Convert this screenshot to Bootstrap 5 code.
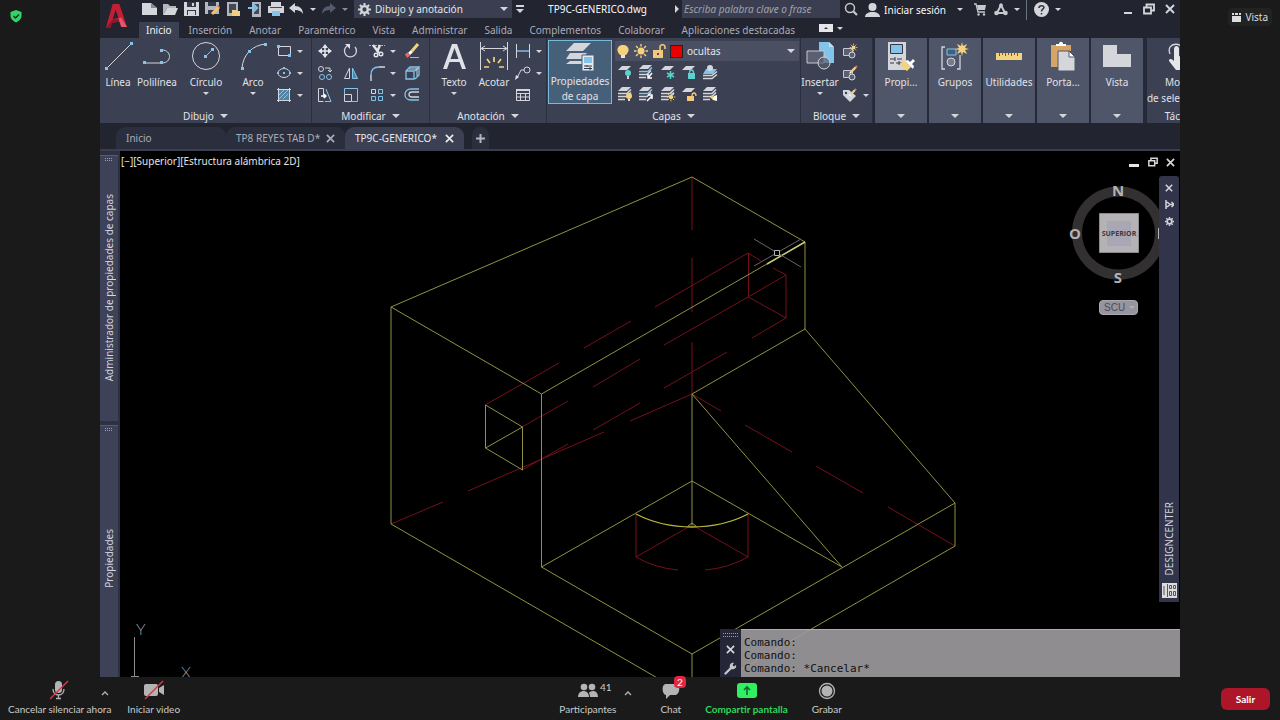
<!DOCTYPE html>
<html lang="es">
<head>
<meta charset="utf-8">
<meta name="viewport" content="width=device-width, initial-scale=1">
<title>TP9C-GENERICO.dwg</title>
<link rel="stylesheet" href="https://cdn.jsdelivr.net/npm/bootstrap@5.3.0/dist/css/bootstrap.min.css">
<style>
:root{--ink:#d4d6dc;--bar:#222430;--panel:#3b4053;--fold:#50566a;--zoom:#1a1a1a}
body{background:var(--zoom);color:var(--ink);font:10px/16px "Noto Sans","Open Sans",sans-serif}
svg{display:block;fill:none;flex:none}
button{border:0;background:none;color:inherit;font:inherit;padding:0;line-height:16px}
.gutter{flex:0 0 100px}
.cad{min-width:0;overflow:hidden;background:var(--bar)}
.brand{flex:0 0 39px}
.titlebar{height:20px}
.cell{width:21px;height:18px;display:flex;align-items:center;justify-content:center;flex:none}
.caret{width:0;height:0;border:3px solid transparent;border-top-color:var(--ink);border-bottom:0;display:block;flex:none}
.caret.wide{border-width:4px 4px 0}
.caret.right{border:4px solid transparent;border-left-color:var(--ink);border-right:0}
.mini{width:11px;height:18px;display:flex;align-items:center;justify-content:center;flex:none}
.combo{appearance:none;border:0;border-radius:0;background:transparent;color:#e4e6ea;font:inherit;padding:0;outline:0;min-width:0;flex:1}
.workspace-pick{width:158px;height:18px;background:#3a3e50}
.finder{width:158px;height:18px;border:0;padding:0 2px;background:#3a3e50;color:#a9abb4;font:italic 10px/16px "Noto Sans","Open Sans",sans-serif}
.finder::placeholder{color:#a0a2ac;opacity:1}
.rtabs{height:18px;padding:0}
.rtabs a{color:#a9acb8;text-decoration:none;padding:0 8px 0 9px;line-height:16px;height:16px;margin-top:2px;white-space:nowrap}
.rtabs a.active{background:var(--panel);color:#f0f1f4;padding:0 7px;margin-right:1px}
.ribbon{height:85px;background:#262938}
.group{background:var(--panel);border-right:1px solid #2b2f3e;flex:none;display:flex;flex-direction:column}
.group footer{height:14px;line-height:14px;display:flex;justify-content:center;align-items:center;gap:6px;white-space:nowrap;color:#e2e4e9}
.tools{flex:1;display:flex;padding-top:2px}
.big{display:flex;flex-direction:column;align-items:center;flex:none;color:#e0e2e8;white-space:nowrap}
.big svg{margin:1px 0 3px}
.big .caret{margin-top:2px}
.trio{display:grid;grid-auto-rows:22px;align-items:center;justify-items:center;flex:none}
.fold{background:var(--fold);width:52px;margin:0 0 0 2px;border:0}
.w36{width:36px}.w42{width:42px}.w56{width:56px}.w38{width:38px}.w48{width:48px}.w32{width:32px}
.layerprops{width:64px;height:64px;background:#47607a;border:1px solid #7ab8dc;margin:0 3px 0 1px;line-height:15px}
.layerpick{height:20px;background:#4a4f62;margin-top:1px;width:184px;padding:0 4px 0 2px}
.swatch{width:13px;height:13px;background:#e60000;border:1px solid #222}
.doctabs{height:28px;padding-left:16px;padding-top:4px;border-bottom:2px solid #3a3e4e}
.dtab{height:22px;background:#2b2f3d;color:#a9acb8;border-radius:9px 9px 0 0;display:flex;align-items:center;justify-content:space-between;padding:0 10px;white-space:nowrap}
.dtab.active{background:var(--panel);color:#e9eaee}
.rail{flex:0 0 20px;background:#2d3142}
.pal{background:#3d4259;width:18px;display:flex;flex-direction:column;align-items:center;border-top:1px solid #555b70}
.pal svg{margin-top:2px}
.vert{writing-mode:vertical-rl;transform:rotate(180deg);line-height:18px;white-space:nowrap}
.canvas{background:#000;min-width:0;overflow:hidden}
.drawing{position:absolute;inset:0;width:100%;height:100%}
.viewlabel{position:absolute;left:1px;top:2px;color:#e4e4e4}
.winbtns{position:absolute;right:1px;top:5px}
.cube{position:absolute;right:16px;top:26px}
.scu{position:absolute;right:42px;top:149px;width:39px;height:15px;border-radius:4px;background:#96959f;color:#4a4a55;border:1px solid #aaa9b2;line-height:13px;font-size:10px;font-family:"Liberation Sans",sans-serif}
.dcenter{position:absolute;right:1px;top:25px;width:20px;height:426px;background:#31344a;border-radius:3px 3px 0 0}
.cmd{position:absolute;right:0;bottom:0;width:460px;height:48px}
.cmd .grip{width:21px;background:#252738}
.cmd pre{flex:1;background:rgba(158,156,160,.9);color:#111;font:11px/13px "DejaVu Sans Mono","Liberation Mono",monospace;padding:6px 3px 0;border-top:1px solid #b0aeb2}
.meet{height:43px;background:var(--zoom);font:10px/14px Lato,"Noto Sans",sans-serif;color:#cacaca}
.meet button{line-height:14px;white-space:nowrap}
.meet-left{flex:0 0 43.7%}
.meet-mid{gap:20px}
.mbtn{display:flex;flex-direction:column;align-items:center;justify-content:flex-end;height:39px}
.mbtn svg{margin-bottom:2px}
.more{position:absolute;bottom:24px;width:10px}
.tally{position:absolute;left:22px;top:0}
.leave{width:49px;height:22px;border-radius:6px;background:#ad1528;color:#fff;font-weight:700;margin-right:10px}
.count{position:absolute;left:12px;top:-6px;width:12px;height:12px;border-radius:4px;background:#e02840;color:#fff;font-size:10px;line-height:12px}
.viewbtn{height:18px;border-radius:4px;background:#222;color:#ddd;padding:0 4px}
.edge-right{align-items:flex-end}
.edge-right svg{margin-right:-12px}
</style>
</head>
<body class="vh-100 d-flex flex-column overflow-hidden">

<svg width="0" height="0" class="position-absolute" aria-hidden="true">
  <defs>
    <symbol id="lay" viewBox="0 0 16 16"><path fill="#d4d6dc" d="M5 2h9l-4 4H1z"/></symbol>
    <symbol id="lays" viewBox="0 0 16 16"><path fill="#d4d6dc" d="M5 1h9l-4 4H1z"/><path stroke="#d4d6dc" stroke-width="1.600" d="M1 7.500h9l4-4M1 10.500h9l4-4M1 13.500h7"/></symbol>
    <symbol id="laysb" viewBox="0 0 16 16"><path fill="#d4d6dc" d="M5 1h9l-4 4H1z"/><path stroke="#84c4ea" stroke-width="1.600" d="M1 7.500h9l4-4"/><path stroke="#d4d6dc" stroke-width="1.600" d="M1 10.500h8l4-4M1 13.500h7"/></symbol>
    <symbol id="sun" viewBox="0 0 16 16"><circle cx="8" cy="8" r="3.500" fill="#f5d27c"/><path stroke="#f5d27c" stroke-width="1.400" d="M8 1v2.500M8 12.500V15M1 8h2.500M12.500 8H15M3 3l2 2M11 11l2 2M13 3l-2 2M5 11l-2 2"/></symbol>
    <symbol id="pencil" viewBox="0 0 16 16"><path fill="#f5d27c" d="M5 9l6-6 2 2-6 6z"/><path fill="#e46a5a" d="M11 3l1.500-1.500 2 2L13 5z"/><path fill="#fff" d="M5 9l2 2-3 1z"/></symbol>
    <symbol id="x" viewBox="0 0 10 10"><path stroke="currentColor" stroke-width="1.900" d="M1 1l8 8M9 1L1 9"/></symbol>
    <symbol id="gear" viewBox="0 0 14 14"><circle cx="7" cy="7" r="3.600" stroke="currentColor" stroke-width="2.600"/><path stroke="currentColor" stroke-width="2.200" d="M7 0v2.500M7 11.500V14M0 7h2.500M11.500 7H14M2 2l2 2M10 10l2 2M12 2l-2 2M4 10l-2 2"/></symbol>
    <symbol id="win" viewBox="0 0 12 12"><path stroke="currentColor" stroke-width="1.800" d="M1 4.500h7v6H1zM3.500 4V1.500H11v6H8"/></symbol>
  </defs>
</svg>

<main class="d-flex flex-fill" style="min-height:0">
  <aside class="gutter ps-2 pt-2"><svg width="16" height="16" viewBox="0 0 16 16"><path fill="#32d466" d="M8 2l5.500 2v4c0 3-2.500 5-5.500 6.500C5 13 2.500 11 2.500 8V4z"/><path stroke="#15351f" stroke-width="1.500" d="M5.500 8l2 2 3.500-3.500"/></svg></aside>

  <section class="cad flex-fill d-flex flex-column">
    <header class="d-flex">
      <div class="brand pt-1 ps-1"><svg width="24" height="25" viewBox="0 0 25 26"><path fill="#c41e34" d="M2 25L9 0h7l8 24h-6l-2-6-8 2-1 5z"/><path fill="#222430" d="M12 6l3 8-6 2z"/><path fill="#8d1628" d="M2 25l6-8 8-2 1 3-9 2-1 5z"/><path fill="#e0566a" d="M18 24l-3-9 3-1 6 10z"/></svg></div>
      <div class="flex-fill" style="min-width:0">
        <div class="titlebar d-flex">
          <button class="cell" aria-label="Nuevo"><svg width="15" height="12" viewBox="0 0 15 12"><path fill="#d4d6dc" d="M0 0h9l6 5v7H0z"/><path fill="#888" d="M9 0v5h6z"/></svg></button>
          <button class="cell" aria-label="Abrir"><svg width="15" height="12" viewBox="0 0 15 12"><path fill="#b4b6bd" d="M0 12V1h5l2 2h6v2H4z"/><path fill="#d4d6dc" d="M4 5h11l-3 7H0z"/></svg></button>
          <button class="cell" aria-label="Guardar"><svg width="15" height="14" viewBox="0 0 15 14"><path fill="#d4d6dc" d="M0 0h15v14H0z"/><path fill="#333849" d="M3 0h9v5H3zM3 8h9v5H3z"/><path fill="#d4d6dc" d="M8 1h2v3H8zM4 9h7v4H4z"/></svg></button>
          <button class="cell" aria-label="Guardar como"><svg width="15" height="14" viewBox="0 0 15 14"><path fill="#b4b6bd" d="M0 0h14v12H0z"/><path fill="#333849" d="M3 0h8v4H3zM3 8h6v4H3z"/><path stroke="#f5c06a" stroke-width="3" d="M7 12l7-7"/><path fill="#e46a5a" d="M12 4l1-1 2 2-1 1z"/></svg></button>
          <button class="cell" aria-label="Abrir móvil"><svg width="14" height="15" viewBox="0 0 14 15"><path fill="#b4b6bd" d="M0 0h11v14H0z"/><path fill="#444959" d="M2 2h7v9H2z"/><path fill="#f0d080" d="M5 8h4l1 1h3v5H5z"/></svg></button>
          <button class="cell" aria-label="Guardar móvil"><svg width="14" height="15" viewBox="0 0 14 15"><path fill="#b4b6bd" d="M4 0h9v15H4z"/><path fill="#444959" d="M6 2h5v10H6z"/><path stroke="#84c4ea" stroke-width="2" d="M0 6h7M5 2l4 4-4 4"/></svg></button>
          <button class="cell" aria-label="Imprimir"><svg width="16" height="14" viewBox="0 0 16 14"><path fill="#d4d6dc" d="M3 0h10v4h3v7H0V4h3z"/><path fill="#454b5c" d="M2 5h12v1H2z"/><path fill="#84c4ea" d="M4 9h8v5H4z"/></svg></button>
          <button class="cell" aria-label="Deshacer"><svg width="15" height="12" viewBox="0 0 15 12"><path fill="#d4d6dc" d="M0 5l6-5v3c5 0 8 3 8 8-2-3-4-4-8-4v3z"/></svg></button>
          <span class="mini"><i class="caret"></i></span>
          <button class="cell" aria-label="Rehacer"><svg width="15" height="12" viewBox="0 0 15 12"><path fill="#555a6a" d="M15 5L9 0v3C4 3 1 6 1 11c2-3 4-4 8-4v3z"/></svg></button>
          <span class="mini"><i class="caret" style="opacity:.6"></i></span>
          <label class="workspace-pick d-flex align-items-center ps-1 pe-1 ms-1"><svg width="13" height="13" class="me-1"><use href="#gear"/></svg><select class="combo" aria-label="Espacio de trabajo"><option>Dibujo y anotación</option></select><i class="caret wide ms-auto"></i></label>
          <span class="cell flex-column gap-1" style="width:16px"><svg width="8" height="9" viewBox="0 0 8 9"><path fill="#d4d6dc" d="M0 0h8v2H0zM0 4h8L4 8z"/></svg></span>
          <span class="flex-fill text-center text-nowrap pt-1 pe-1 lh-1 text-light">TP9C-GENERICO.dwg</span>
          <span class="mini"><i class="caret right"></i></span>
          <input class="finder" type="text" aria-label="Buscar" placeholder="Escriba palabra clave o frase">
          <button class="cell" aria-label="Buscar"><svg width="14" height="14" viewBox="0 0 14 14"><circle cx="6" cy="6" r="4.500" stroke="#c6c8ce" stroke-width="1.500"/><path stroke="#c6c8ce" stroke-width="2.200" d="M9.500 9.500L13 13"/></svg></button>
          <button class="d-flex align-items-center gap-1 text-nowrap text-light ms-1"><svg width="15" height="14" viewBox="0 0 15 14"><circle cx="7.500" cy="4" r="4" fill="#d4d6dc"/><path fill="#d4d6dc" d="M0 14c0-3 3-5 7.500-5s7.500 2 7.500 5z"/></svg>Iniciar sesión</button>
          <span class="mini ms-2"><i class="caret"></i></span>
          <button class="cell ms-1" aria-label="Tienda"><svg width="12" height="13" viewBox="0 0 12 13"><path stroke="#c6c8ce" stroke-width="1.300" d="M0 1h2l2 8h7"/><path fill="#c6c8ce" d="M3 2h9l-1 5H4z"/><circle cx="4.500" cy="11.500" r="1.200" fill="#c6c8ce"/><circle cx="10" cy="11.500" r="1.200" fill="#c6c8ce"/></svg></button>
          <button class="cell" aria-label="Autodesk"><svg width="14" height="13" viewBox="0 0 14 13"><path stroke="#c6c8ce" stroke-width="2" d="M7 2L3 10h8z"/><circle cx="7" cy="2.500" r="2" fill="#c6c8ce"/><circle cx="2.500" cy="10" r="2.300" fill="#c6c8ce"/><circle cx="11.500" cy="10" r="2.300" fill="#c6c8ce"/></svg></button>
          <span class="mini"><i class="caret"></i></span>
          <span class="border-start border-secondary ms-1 me-1"></span>
          <button class="cell" aria-label="Ayuda"><svg width="15" height="15" viewBox="0 0 15 15"><circle cx="7.500" cy="7.500" r="7.500" fill="#d4d6dc"/><path stroke="#333849" stroke-width="1.600" d="M5 6c0-3 5-3 5-.500C10 7 7.500 7 7.500 9.500M7.500 11v1.600"/></svg></button>
          <span class="mini"><i class="caret"></i></span>
          <span style="width:54px"></span>
          <button class="cell" aria-label="Minimizar"><svg width="12" height="12" viewBox="0 0 12 12"><path fill="#d4d6dc" d="M2 9h8v2H2z"/></svg></button>
          <button class="cell" aria-label="Restaurar"><svg width="12" height="12"><use href="#win"/></svg></button>
          <button class="cell" aria-label="Cerrar"><svg width="10" height="10"><use href="#x"/></svg></button>
        </div>
        <nav class="rtabs d-flex align-items-start">
          <a class="active" href="#">Inicio</a><a href="#">Inserción</a><a href="#">Anotar</a><a href="#">Paramétrico</a><a href="#">Vista</a><a href="#">Administrar</a><a href="#">Salida</a><a href="#">Complementos</a><a href="#">Colaborar</a><a href="#">Aplicaciones destacadas</a>
          <button class="d-flex align-items-center gap-1 ms-3 mt-1" aria-label="Minimizar cinta"><svg width="14" height="8" viewBox="0 0 14 8"><path fill="#e4e6ea" d="M0 0h14v8H0z"/><path fill="#333" d="M5 5l2-2 2 2z"/></svg><i class="caret"></i></button>
        </nav>
      </div>
    </header>

    <div class="ribbon d-flex">
      <section class="group" style="width:212px">
        <div class="tools">
          <button class="big w36"><svg width="30" height="30" viewBox="0 0 30 30"><path stroke="#d4d6dc" d="M3 28L28 3"/><path fill="#84c4ea" d="M2 26h3v3H2zM27 1h3v3h-3z"/></svg>Línea</button>
          <button class="big w42"><svg width="30" height="30" viewBox="0 0 30 30"><path stroke="#d4d6dc" d="M2 22h18c10 0 10-13 0-13"/><path fill="#84c4ea" d="M1 20h3v3H1zM18 20h3v3h-3zM18 8h3v3h-3z"/></svg>Polilínea</button>
          <button class="big w56"><svg width="30" height="30" viewBox="0 0 30 30"><circle cx="15" cy="15" r="13.500" stroke="#d4d6dc"/><path stroke="#84c4ea" d="M15 15l7-7"/><path fill="#84c4ea" d="M13 14h3v3h-3zM20 7h3v3h-3z"/></svg>Círculo<i class="caret"></i></button>
          <button class="big w38"><svg width="30" height="30" viewBox="0 0 30 30"><path stroke="#d4d6dc" d="M4 27C5 14 14 4 28 3"/><path fill="#84c4ea" d="M3 26h3v3H3zM10 9h3v3h-3zM26 2h3v3h-3z"/></svg>Arco<i class="caret"></i></button>
          <div class="trio" style="grid-template-columns:24px 8px">
            <button aria-label="Rectángulo"><svg width="16" height="16" viewBox="0 0 16 16"><path stroke="#d4d6dc" d="M2.500 3.500h12v9h-12z"/><path fill="#84c4ea" d="M1 2h3v3H1zM12 11h3v3h-3z"/></svg></button><i class="caret"></i>
            <button aria-label="Elipse"><svg width="16" height="16" viewBox="0 0 16 16"><ellipse cx="8" cy="8" rx="6" ry="4.500" stroke="#d4d6dc"/><path fill="#84c4ea" d="M7 7h2v2H7zM1 7h2v2H1zM13 7h2v2h-2zM7 2h2v2H7z"/></svg></button><i class="caret"></i>
            <button aria-label="Sombreado"><svg width="16" height="16" viewBox="0 0 16 16"><path fill="#5183a5" d="M3 3h10v10H3z"/><path stroke="#84c4ea" d="M3 8l5-5M3 12l9-9M7 12l5-5"/><path stroke="#d4d6dc" d="M2.500 1v14M13.500 1v14M1 2.500h14M1 13.500h14"/></svg></button><i class="caret"></i>
          </div>
        </div>
        <footer>Dibujo<i class="caret wide"></i></footer>
      </section>

      <section class="group" style="width:118px">
        <div class="tools">
          <div class="trio" style="grid-template-columns:26px 26px 26px 6px 32px">
            <button aria-label="Desplazar"><svg width="16" height="16" viewBox="0 0 16 16"><path stroke="#e4e6ea" stroke-width="1.500" d="M8 2v12M2 8h12"/><path fill="#e4e6ea" d="M8 1l3 4H5zM8 15l3-4H5zM1 8l4-3v6zM15 8l-4-3v6z"/></svg></button>
            <button aria-label="Girar"><svg width="16" height="16" viewBox="0 0 16 16"><path stroke="#d4d6dc" stroke-width="1.300" d="M4 3a6 6 0 1 0 8 1"/><path fill="#e4e6ea" d="M2 1h5v5z"/></svg></button>
            <button aria-label="Recortar"><svg width="16" height="16" viewBox="0 0 16 16"><path stroke="#84c4ea" stroke-dasharray="2 1" d="M0 2.500h16"/><path stroke="#e4e6ea" stroke-width="2.400" d="M4 2l6 8M11 2L8 9"/><circle cx="7" cy="12" r="1.800" stroke="#e4e6ea" stroke-width="1.400"/><circle cx="12" cy="11" r="1.800" stroke="#e4e6ea" stroke-width="1.400"/></svg></button><i class="caret"></i>
            <button aria-label="Borrar"><svg width="16" height="16" viewBox="0 0 16 16"><path stroke="#f5d27c" stroke-width="3" d="M8 8l6-7"/><path stroke="#fff" stroke-width="3" d="M5 11l3-3"/><path stroke="#e46a5a" stroke-width="4" d="M2 13l3-2"/><path stroke="#84c4ea" d="M6 14.500h9"/></svg></button>
            <button aria-label="Copiar"><svg width="16" height="16" viewBox="0 0 16 16"><circle cx="4" cy="4" r="2.500" stroke="#d4d6dc"/><path stroke="#d4d6dc" d="M8 3h5v4M11 5l2 2 2-2"/><circle cx="5" cy="12" r="2.500" stroke="#84c4ea"/><circle cx="12" cy="12" r="2.500" stroke="#84c4ea"/></svg></button>
            <button aria-label="Simetría"><svg width="16" height="16" viewBox="0 0 16 16"><path stroke="#d4d6dc" d="M6.500 3v10.500h-5z"/><path fill="#5183a5" stroke="#84c4ea" d="M9.500 3v10.500h5z"/></svg></button>
            <button aria-label="Empalme"><svg width="16" height="16" viewBox="0 0 16 16"><path stroke="#84c4ea" stroke-width="1.400" d="M2 10c0-6 3-8 8-8"/><path stroke="#d4d6dc" stroke-width="1.400" d="M2 10v6M10 2h6"/></svg></button><i class="caret"></i>
            <button aria-label="Descomponer"><svg width="16" height="16" viewBox="0 0 16 16"><path stroke="#84c4ea" stroke-width="1.300" d="M2 6h8v8H2zM2 6l4-4h9l-4 4M15 2v8l-4 4"/><path stroke="#d4d6dc" d="M5 4h8v7"/></svg></button>
            <button aria-label="Estirar"><svg width="16" height="16" viewBox="0 0 16 16"><path stroke="#d4d6dc" d="M6.500 14.500h-5v-13h5v9"/><path stroke="#84c4ea" d="M9 2l5 12.500H8"/><path stroke="#fff" stroke-width="1.400" d="M4 9h5M7 7l2 2-2 2"/></svg></button>
            <button aria-label="Escala"><svg width="16" height="16" viewBox="0 0 16 16"><path stroke="#84c4ea" d="M1.500 7V1.500h13v13H9"/><path stroke="#d4d6dc" d="M1.500 7.500h7v7h-7z"/></svg></button>
            <button aria-label="Matriz"><svg width="16" height="16" viewBox="0 0 16 16"><path stroke="#84c4ea" d="M9.500 2.500h4v4h-4zM2.500 9.500h4v4h-4zM9.500 9.500h4v4h-4z"/><path stroke="#d4d6dc" d="M2.500 2.500h4v4h-4z"/></svg></button><i class="caret"></i>
            <button aria-label="Desfase"><svg width="16" height="16" viewBox="0 0 16 16"><path stroke="#84c4ea" stroke-width="1.300" d="M15 2H7C-1 2-1 13 7 13h8"/><path stroke="#d4d6dc" stroke-width="1.300" d="M15 5H8c-4 0-4 5 0 5h7"/></svg></button>
          </div>
        </div>
        <footer>Modificar<i class="caret wide"></i></footer>
      </section>

      <section class="group" style="width:117px">
        <div class="tools">
          <button class="big w48"><svg width="30" height="30" viewBox="0 0 30 30"><path fill="#e0e1e6" fill-rule="evenodd" d="M4 28L13 3h5l9 25h-4l-2.500-7H10.500L8 28zM11.500 18h8L15.500 7z"/></svg>Texto<i class="caret"></i></button>
          <button class="big w32"><svg width="30" height="30" viewBox="0 0 30 30"><path stroke="#d4d6dc" d="M1.500 1v28M28.500 1v28M2 7.500h26M6 5L2 7.500 6 10M24 5l4 2.500-4 2.500"/><path stroke="#f5d27c" stroke-width="1.700" d="M15 16v5M8 18l3 4M22 18l-3 4M5 26h5M20 26h5"/></svg>Acotar</button>
          <div class="trio" style="grid-template-columns:26px 6px">
            <button aria-label="Lineal"><svg width="16" height="16" viewBox="0 0 16 16"><path stroke="#d4d6dc" d="M1.500 1v14M14.500 1v14"/><path stroke="#84c4ea" stroke-width="1.400" d="M2 8h12"/></svg></button><i class="caret"></i>
            <button aria-label="Directriz"><svg width="16" height="16" viewBox="0 0 16 16"><circle cx="12" cy="5" r="3" stroke="#d4d6dc"/><path stroke="#d4d6dc" d="M9 5H6l-4 8"/><path fill="#e4e6ea" d="M0 15l1-5 3 2z"/></svg></button><i class="caret"></i>
            <button aria-label="Tabla"><svg width="16" height="16" viewBox="0 0 16 16"><path stroke="#d4d6dc" d="M1.500 2.500h13v11h-13zM1 6.500h14M1 10h14M5.500 6v8M10.500 6v8"/><path fill="#d4d6dc" d="M1 2h14v2H1z"/></svg></button>
          </div>
        </div>
        <footer>Anotación<i class="caret wide"></i></footer>
      </section>

      <section class="group" style="width:254px">
        <div class="tools">
          <button class="big layerprops"><svg width="30" height="29" viewBox="0 0 30 29"><path fill="#d4d6dc" d="M9 1h17l-8 8H1zM5 11h17l-5 6H1zM5 19h13v3H1z"/><path fill="#e6e8ec" stroke="#47607a" d="M17 13h12v16H17z"/><path fill="#84c4ea" d="M19 15h8v6h-8z"/><path stroke="#333849" d="M19 24h8M19 26.500h8M22 23v2M25 25v3"/></svg><span class="text-wrap">Propiedades de capa</span></button>
          <div>
            <label class="layerpick d-flex align-items-center"><svg width="12" height="15" viewBox="0 0 12 15" class="me-1"><path fill="#f5d27c" d="M3 11C-2 6 1 1 6 1s8 5 3 10z"/><path fill="#e4e6ea" d="M4 11h4v3H4z"/></svg><svg width="16" height="16" class="me-1"><use href="#sun"/></svg><svg width="13" height="14" viewBox="0 0 13 14" class="me-1"><path fill="#f5c97a" d="M0 6h10v8H0z"/><path stroke="#f5c97a" stroke-width="1.600" d="M7 6V3c0-3 5-3 5 0v2"/><path fill="#4a4f62" d="M4 9h2v2H4z"/></svg><span class="swatch me-1"></span><select class="combo" aria-label="Capa"><option>ocultas</option></select><i class="caret wide ms-auto"></i></label>
            <div class="trio" style="grid-template-columns:20px 22px 21px 22px 20px;width:105px">
              <button aria-label="Desactivar"><svg width="16" height="16" viewBox="0 0 16 16"><use href="#lay"/><circle cx="11" cy="9" r="3" fill="#59d3cc"/><path fill="#d4d6dc" d="M10 12h2v3h-2z"/></svg></button>
              <button aria-label="Aislar"><svg width="16" height="16" viewBox="0 0 16 16"><use href="#laysb"/><path stroke="#fff" stroke-width="1.500" d="M14 9l-4 5M10 10v4h4"/></svg></button>
              <button aria-label="Inutilizar"><svg width="16" height="16" viewBox="0 0 16 16"><use href="#lay"/><path stroke="#59d3cc" stroke-width="1.500" d="M10.500 7v8M7 9l7 4M14 9l-7 4"/></svg></button>
              <button aria-label="Bloquear"><svg width="16" height="16" viewBox="0 0 16 16"><use href="#lay"/><path fill="#59d3cc" d="M7 9h7v6H7z"/><path stroke="#59d3cc" stroke-width="1.300" d="M8.500 9c0-4 4-4 4 0"/></svg></button>
              <button aria-label="Definir actual"><svg width="16" height="16" viewBox="0 0 16 16"><path fill="#84c4ea" d="M4 5h11l-4 5H1z"/><circle cx="8" cy="4" r="3" fill="#d4d6dc"/><path stroke="#d4d6dc" stroke-width="1.500" d="M1 11.500h9l5-4M1 14.500h9l5-4"/></svg></button>
              <button aria-label="Activar todas"><svg width="16" height="16" viewBox="0 0 16 16"><use href="#lays"/><circle cx="12" cy="10" r="3" fill="#f5d27c"/><path fill="#e4e6ea" d="M11 13h2v2h-2z"/></svg></button>
              <button aria-label="Desaislar"><svg width="16" height="16" viewBox="0 0 16 16"><use href="#laysb"/><path stroke="#fff" stroke-width="1.500" d="M9 15l5-5M10 9h4v4"/></svg></button>
              <button aria-label="Reutilizar"><svg width="16" height="16" viewBox="0 0 16 16"><use href="#lays"/><use href="#sun" x="6" y="6" width="10" height="10"/></svg></button>
              <button aria-label="Desbloquear"><svg width="16" height="16" viewBox="0 0 16 16"><use href="#lay"/><path fill="#f5c97a" d="M6 10h7v5H6z"/><path stroke="#f5c97a" stroke-width="1.300" d="M11 10c0-4 4-4 4 0"/></svg></button>
              <button aria-label="Igualar capa"><svg width="16" height="16" viewBox="0 0 16 16"><use href="#lays"/><path stroke="#f5d27c" stroke-width="3" d="M9 10l3 3"/><path fill="#fff" d="M12 10l3-1v6l-4-1z"/></svg></button>
            </div>
          </div>
        </div>
        <footer>Capas<i class="caret wide"></i></footer>
      </section>

      <section class="group" style="width:72px">
        <div class="tools">
          <button class="big w38"><svg width="30" height="30" viewBox="0 0 30 30"><path fill="#84c4ea" d="M14 1h10l5 5v16H14z"/><path fill="#b8dff5" d="M24 1v5h5z"/><path fill="#5b6070" stroke="#c6c8ce" d="M2 10h17v12H2z"/><circle cx="19" cy="22" r="6" fill="#5b6070" fill-opacity=".7" stroke="#d4d6dc"/></svg>Insertar<i class="caret"></i></button>
          <div class="trio" style="grid-template-columns:22px 10px">
            <button aria-label="Crear bloque"><svg width="16" height="16" viewBox="0 0 16 16"><path fill="#5b6070" stroke="#c6c8ce" d="M1.500 5.500h9v7h-9z"/><circle cx="10" cy="12" r="3" fill="#5b6070" stroke="#d4d6dc"/><use href="#sun" x="7" y="0" width="9" height="9"/></svg></button><i></i>
            <button aria-label="Editar bloque"><svg width="16" height="16" viewBox="0 0 16 16"><path fill="#5b6070" stroke="#c6c8ce" d="M1.500 5.500h9v7h-9z"/><circle cx="10" cy="12" r="3" fill="#5b6070" stroke="#d4d6dc"/><use href="#pencil" x="4" y="-1" width="13" height="13"/></svg></button><i></i>
            <button aria-label="Editar atributos"><svg width="16" height="16" viewBox="0 0 16 16"><path fill="#d4d6dc" d="M1 3h6l7 6-6 6-7-7z"/><circle cx="4" cy="6" r="1.200" fill="#3b4053"/><use href="#pencil" x="4" y="0" width="12" height="12"/></svg></button><i class="caret"></i>
          </div>
        </div>
        <footer>Bloque<i class="caret wide"></i></footer>
      </section>

      <section class="group fold"><div class="tools justify-content-center"><button class="big"><svg width="30" height="30" viewBox="0 0 30 30"><path fill="#d4d6dc" d="M2 1h18v28H2z"/><path fill="#84c4ea" stroke="#333849" d="M4.500 3.500h12v9h-12z"/><path stroke="#333849" d="M4 18h5M11 18h5M4 22h4M10 22h7M9 16v4M13 20v4"/><path stroke="#f5d27c" stroke-width="6" d="M16 21l7 7"/><path fill="#fff" d="M19 20l3-1 2 2 3-3 2 2-3 3 2 2-1 3z"/></svg>Propi...</button></div><footer><i class="caret wide"></i></footer></section>
      <section class="group fold"><div class="tools justify-content-center"><button class="big"><svg width="30" height="30" viewBox="0 0 30 30"><path stroke="#d4d6dc" stroke-width="1.300" d="M5 6H2v22h3M17 28h3V14"/><path fill="#3d5f80" stroke="#84c4ea" d="M7 8h9v6H7z"/><circle cx="11" cy="21" r="4" fill="#777c8b" stroke="#d4d6dc"/><path fill="#f5d27c" d="M22 1l1 4 4-2-2 4 4 1-4 1 2 4-4-2-1 4-1-4-4 2 2-4-4-1 4-1-2-4 4 2z"/></svg>Grupos</button></div><footer><i class="caret wide"></i></footer></section>
      <section class="group fold"><div class="tools justify-content-center"><button class="big"><svg width="30" height="30" viewBox="0 0 30 30"><path fill="#f5d27c" d="M2 12h26v7H2z"/><path stroke="#725b2c" d="M5.500 12v3M8.500 12v2M11.500 12v3M14.500 12v2M17.500 12v3M20.500 12v2M23.500 12v3"/></svg>Utilidades</button></div><footer><i class="caret wide"></i></footer></section>
      <section class="group fold"><div class="tools justify-content-center"><button class="big"><svg width="30" height="30" viewBox="0 0 30 30"><path fill="#d6a566" d="M3 4h20v22H3z"/><path fill="#fff" d="M8 5V3h3c0-3 4-3 4 0h3v2z"/><path fill="#d4d6dc" stroke="#50566a" d="M10 10h12l5 5v15H10z"/><path fill="#fff" stroke="#50566a" d="M21 10v6h6z"/></svg>Porta...</button></div><footer><i class="caret wide"></i></footer></section>
      <section class="group fold"><div class="tools justify-content-center"><button class="big"><svg width="30" height="30" viewBox="0 0 30 30"><path fill="#d4d6dc" d="M1 4h14v9h14v13H1z"/></svg>Vista</button></div><footer><i class="caret wide"></i></footer></section>
      <section class="group flex-fill border-0 ms-1 overflow-hidden">
        <div class="tools justify-content-end"><button class="big edge-right"><svg width="30" height="30" viewBox="0 0 30 30"><path stroke="#d4d6dc" stroke-width="1.300" d="M8 13C3 1 23-1 22 13"/><path fill="#e4e6ea" d="M12 8c0-4 5-4 5 0v7l8 3c2 1 0 9-4 11h-7l-7-9c0-3 3-2 5 0z"/></svg><span>Mo</span><span>de sele</span></button></div>
        <footer class="justify-content-end">Tác</footer>
      </section>
    </div>

    <nav class="doctabs d-flex">
      <button class="dtab" style="width:110px">Inicio</button>
      <button class="dtab" style="width:119px">TP8 REYES TAB D*<svg width="9" height="9"><use href="#x"/></svg></button>
      <button class="dtab active" style="width:119px">TP9C-GENERICO*<svg width="9" height="9"><use href="#x"/></svg></button>
      <button class="dtab ms-2 px-1" aria-label="Nueva pestaña"><svg width="9" height="9" viewBox="0 0 9 9"><path stroke="#b4b6bd" stroke-width="2" d="M0 4.500h9M4.500 0v9"/></svg></button>
    </nav>

    <div class="d-flex flex-fill" style="min-height:0">
      <aside class="rail d-flex flex-column pt-1 gap-1">
        <section class="pal" style="height:266px"><svg width="8" height="3" viewBox="0 0 8 3"><path stroke="#9a9eac" stroke-dasharray="1 1" d="M0 .500h8M0 2.500h8"/></svg><span class="vert" style="margin-top:33px">Administrador de propiedades de capas</span></section>
        <section class="pal flex-fill"><svg width="8" height="3" viewBox="0 0 8 3"><path stroke="#9a9eac" stroke-dasharray="1 1" d="M0 .500h8M0 2.500h8"/></svg><span class="vert" style="margin-top:98px">Propiedades</span></section>
      </aside>
      <section class="canvas position-relative flex-fill">
        <svg class="drawing" viewBox="120 151 1060 526" preserveAspectRatio="xMinYMin slice">
          <g stroke="#76101c">
            <path d="M692 177v53M692 258v54M692 342v52M748.500 253v44L786 318v-43L748 297M748 253l13 8M773 268l13 7"/>
            <path d="M748 253L655 307M631 321L584 348M559 363L485 405M748 297L664 345M640 359L593 387M568 401L522 427M786 318L752 338M727 352L664 388M640 403L593 430M568 444L522 470"/>
            <path d="M692 394L630 421M604 432L468 491M443 502L391 524M692 394L721 411M745 425L792 452M816 466L863 493M888 507L955 546"/>
            <path d="M636 514v43L692 525 748 557V514M636 557Q655 568 678 570M705 570Q729 568 748 557"/>
          </g>
          <g stroke="#929242">
            <path d="M692 177L391 307 541.500 394 805 242zM391 307V524L692 698 955 546V503L692 654 541.500 567V394M692 654v44"/>
            <path d="M805 242v87L692 394V525M805 329L955 503M692 394L842 567 692 481 541.500 567M485.500 405L522.500 427V470L485.500 448zM485.500 448L522.500 427M688 526l4-3 4 3"/>
            <path stroke="#b9b93c" stroke-width="1.300" d="M636 514Q661 527 692 527T748 514"/>
            <path stroke="#c8c87a" stroke-width="1.500" d="M805 242L767 264"/>
          </g>
          <path stroke="#69656a" d="M754 239L801 267M754 266L801 239"/><path fill="#000" stroke="#b4b4b4" d="M774.500 250.500h5v5h-5z"/>
          <path stroke="#8c8c8c" d="M134.500 637v40M131 676.500h8"/>
          <g fill="#9c9c9c" font-family="Lato" font-weight="300" font-size="16"><text x="136" y="635">Y</text><text x="181" y="678">X</text></g>
        </svg>
        <div class="viewlabel">[−][Superior][Estructura alámbrica 2D]</div>
        <div class="winbtns d-flex align-items-center"><button class="me-1" aria-label="Minimizar dibujo"><svg width="12" height="12" viewBox="0 0 12 12"><path fill="#e4e6ea" d="M1 8h10v3H1z"/></svg></button><button class="px-1" aria-label="Restaurar dibujo"><svg width="10" height="10"><use href="#win"/></svg></button><button class="px-1" aria-label="Cerrar dibujo"><svg width="9" height="9"><use href="#x"/></svg></button></div>
        <svg class="cube" width="96" height="114" viewBox="1068 177 96 114"><circle cx="1118.500" cy="233" r="41.500" stroke="#323031" stroke-width="10"/><path fill="#b4b2b5" stroke="#8c8a8e" d="M1099.500 213.500h39v39h-39z"/><path fill="#a9a7b3" d="M1107 221h24v25h-24z"/><path fill="#b4b2b4" d="M1158 228h1v11h-1z"/><g text-anchor="middle" font-family="Open Sans" font-weight="700"><text x="1119" y="236" font-size="7" fill="#3a3a45">SUPERIOR</text><g fill="#b4b2b4" font-size="15"><text x="1118" y="196">N</text><text x="1118" y="283">S</text><text x="1075" y="239">O</text></g></g></svg>
        <button class="scu d-flex align-items-center gap-1 px-1">SCU<i class="caret" style="opacity:.4"></i></button>
        <aside class="dcenter d-flex flex-column align-items-center pt-1">
          <div class="d-flex flex-column align-items-center gap-2 pt-1"><svg width="8" height="8"><use href="#x"/></svg><svg width="9" height="9" viewBox="0 0 9 9"><path stroke="#d4d6dc" stroke-width="1.500" d="M1 0v9M2 2l3 2.500L2 7M4 4.500h5M6.500 2L9 4.500 6.500 7"/></svg><svg width="9" height="9"><use href="#gear"/></svg></div>
          <span class="vert mt-auto mb-2">DESIGNCENTER</span>
          <svg width="15" height="15" viewBox="0 0 15 15" class="mb-1"><path fill="#dcdcdc" d="M0 0h15v15H0z"/><path stroke="#555" d="M5.500 1v13M2 3v9M7.500 2.500h2v3h-2zM11.500 2.500h2v3h-2zM7.500 8.500h2v4h-2zM11.500 8.500h2v4h-2z"/></svg>
        </aside>
        <section class="cmd d-flex">
          <div class="grip d-flex flex-column align-items-center gap-2 pt-1"><svg width="16" height="4" viewBox="0 0 16 4"><path stroke="#9a9eac" stroke-dasharray="1 1" d="M0 .500h16M0 3.500h16"/></svg><svg width="9" height="9"><use href="#x"/></svg><svg width="13" height="13" viewBox="0 0 13 13"><path stroke="#c6c8ce" stroke-width="2.300" stroke-linecap="round" d="M1.500 11.500l6-6"/><path fill="#c6c8ce" d="M6 6c-1-3 1-6 4-5L8.500 3l1.500 1.500L12 3c1 3-2 5-5 4z"/></svg></div>
          <pre class="m-0 overflow-hidden">Comando:
Comando:
Comando: *Cancelar*</pre>
        </section>
      </section>
    </div>
  </section>

  <aside class="gutter pt-2 pe-2 d-flex justify-content-end align-items-start"><button class="viewbtn d-flex align-items-center gap-1"><svg width="9" height="9" viewBox="0 0 9 9"><path fill="#ddd" d="M0 3h9v6H0zM0 0h2v2H0zM3 0h3v2H3zM7 0h2v2H7z"/></svg>Vista</button></aside>
</main>

<footer class="meet d-flex flex-shrink-0">
  <div class="meet-left d-flex ps-2">
    <div class="position-relative me-3">
      <button class="mbtn"><svg width="20" height="20" viewBox="0 0 20 20"><rect x="5" y="1" width="7" height="12" rx="3.500" fill="#b4b4b4"/><path stroke="#b4b4b4" stroke-width="1.300" d="M3 9c0 8 11 8 11 0M8.500 15v3M6 18.500h5"/><path stroke="#d33a4c" stroke-width="1.500" d="M0 19L18 1"/></svg>Cancelar silenciar ahora</button>
      <button class="more end-0" aria-label="Opciones de audio"><svg width="8" height="5" viewBox="0 0 8 5"><path stroke="#b4b4b4" stroke-width="1.300" d="M1 4l3-3 3 3"/></svg></button>
    </div>
    <button class="mbtn"><svg width="20" height="20" viewBox="0 0 20 20"><rect x="0" y="4" width="14" height="12" rx="2" fill="#b4b4b4"/><path fill="#b4b4b4" d="M15 8l5-3v10l-5-3z"/><path stroke="#d33a4c" stroke-width="1.500" d="M1 19L19 1"/></svg>Iniciar video</button>
  </div>
  <div class="meet-mid d-flex">
    <div class="position-relative me-4">
      <button class="mbtn"><span class="position-relative"><svg width="20" height="20" viewBox="0 0 20 20"><g fill="#b4b4b4"><circle cx="6" cy="7" r="3.300"/><circle cx="14" cy="7" r="3.300"/><path d="M0 17c0-8 11-8 11 0z"/><path d="M12 17c0-3-1-4-1-4 2-3 9-3 9 4z"/></g></svg><span class="tally">41</span></span>Participantes</button>
      <button class="more start-100 ms-2" aria-label="Opciones de participantes"><svg width="8" height="5" viewBox="0 0 8 5"><path stroke="#b4b4b4" stroke-width="1.300" d="M1 4l3-3 3 3"/></svg></button>
    </div>
    <button class="mbtn"><span class="position-relative"><svg width="18" height="18" viewBox="0 0 18 18"><path fill="#b4b4b4" d="M4 2h10c5 0 4 11-1 11H8l-4 4v-4C0 13-1 2 4 2z"/></svg><span class="count">2</span></span>Chat</button>
    <button class="mbtn px-1 fw-bold" style="color:#2fd65c"><svg width="20" height="18" viewBox="0 0 20 18"><rect y="1" width="20" height="15" rx="3" fill="#2ff05e"/><path stroke="#163" stroke-width="1.600" d="M10 13V5M7 8l3-3 3 3"/></svg>Compartir pantalla</button>
    <button class="mbtn"><svg width="18" height="18" viewBox="0 0 18 18"><circle cx="9" cy="9" r="7.500" stroke="#b4b4b4" stroke-width="1.300"/><circle cx="9" cy="9" r="5.500" fill="#b4b4b4"/></svg>Grabar</button>
  </div>
  <div class="ms-auto d-flex align-items-center"><button class="leave">Salir</button></div>
</footer>
<script src="https://cdn.jsdelivr.net/npm/bootstrap@5.3.0/dist/js/bootstrap.bundle.min.js"></script>
</body>
</html>
